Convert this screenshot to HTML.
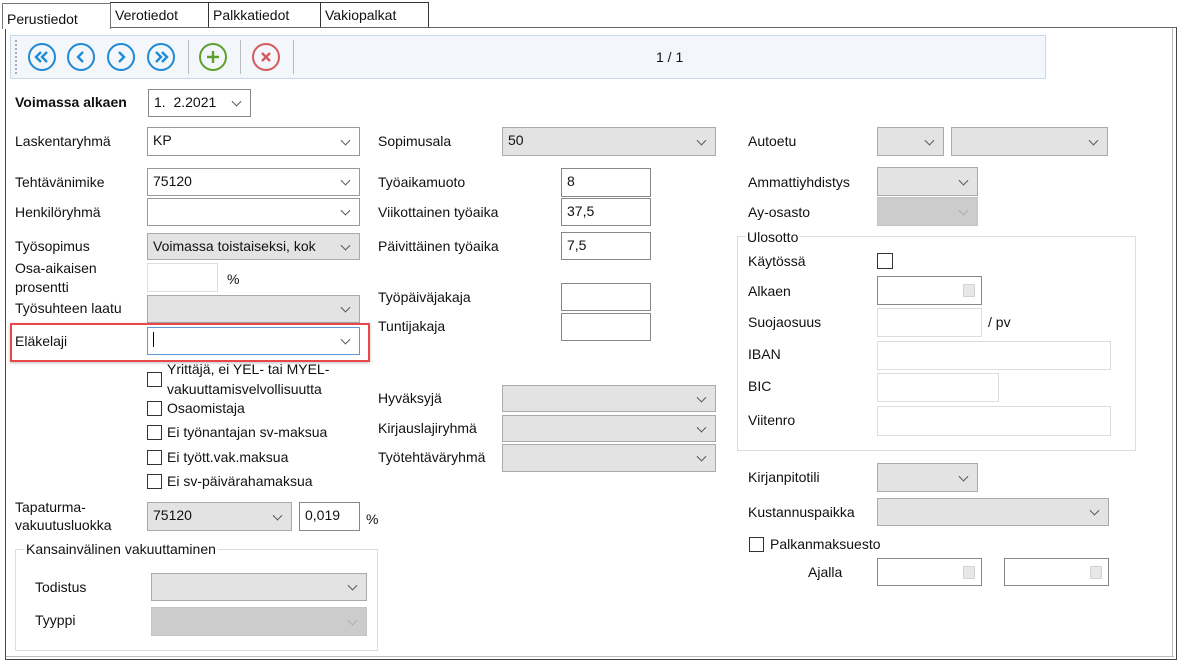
<!DOCTYPE html>
<html><head><meta charset="utf-8"><style>
*{box-sizing:border-box;margin:0;padding:0}
body{width:1180px;height:662px;background:#fff;position:relative;overflow:hidden;font-family:"Liberation Sans",sans-serif;font-size:14px;color:#111}
.a{position:absolute}
.l{position:absolute;line-height:16px;white-space:nowrap}
.s{position:absolute;border:1px solid #aaa;background:#e3e3e3;padding:3px 0 0 5px;line-height:18px}
.s.w{background:#fff;border-color:#999}
.s.d{background:#ccc;border-color:#c4c4c4}
.s::after{content:"";position:absolute;right:10px;top:50%;width:6px;height:6px;border-right:1px solid #555;border-bottom:1px solid #555;transform:translateY(-70%) rotate(45deg)}
.s.d::after{border-color:#aaa}
.i{position:absolute;border:1px solid #888;background:#fff;padding:3px 0 0 5px;line-height:18px}
.i.lt{border-color:#ddd}
.cb{position:absolute;width:15px;height:15px;border:1px solid #333;background:#fff}
.cal{position:absolute;right:6px;top:7px;width:12px;height:13px;background:#e8e8e8;border:1px solid #d2d2d2;border-radius:1px}
.tab{position:absolute;border:1px solid #333;border-bottom:none;background:#fff;padding:4px 0 0 4px;line-height:16px}
.btn{position:absolute;width:28px;height:28px;border-radius:50%;border:2px solid #1f8ad6;top:43px}
.sep{position:absolute;top:40px;width:1px;height:34px;background:#bbb}
fieldset{position:absolute;border:1px solid #ddd}
</style></head><body>
<!-- outer panel border -->
<div class="a" style="left:5px;top:27px;width:1172px;height:633px;border:1px solid #444;border-top:1px solid #666"></div>
<div class="a" style="left:6px;top:655px;width:1168px;height:2px;border-bottom:1px solid #bbb"></div>
<div class="a" style="left:1172px;top:28px;width:1px;height:628px;background:#bbb"></div>
<!-- tabs -->
<div class="tab" style="left:110px;top:2px;width:99px;height:25px">Verotiedot</div>
<div class="tab" style="left:208px;top:2px;width:113px;height:25px">Palkkatiedot</div>
<div class="tab" style="left:320px;top:2px;width:109px;height:25px">Vakiopalkat</div>
<div class="tab" style="left:2px;top:3px;width:109px;height:26px;border-color:#777;padding-top:7px;z-index:2">Perustiedot</div>
<!-- toolbar -->
<div class="a" style="left:10px;top:35px;width:1036px;height:44px;background:#f3f6fb;border:1px solid #c9d8ec"></div>
<div class="a" style="left:15px;top:40px;width:2px;height:34px;border-left:2px dotted #aab"></div>
<div class="btn" style="left:28px"><svg width="24" height="24" viewBox="0 0 24 24" style="position:absolute;left:0;top:0"><path d="M11 7l-5 5 5 5M17 7l-5 5 5 5" fill="none" stroke="#1f8ad6" stroke-width="2.4"/></svg></div>
<div class="btn" style="left:67px"><svg width="24" height="24" viewBox="0 0 24 24" style="position:absolute;left:0;top:0"><path d="M14 7l-5 5 5 5" fill="none" stroke="#1f8ad6" stroke-width="2.4"/></svg></div>
<div class="btn" style="left:107px"><svg width="24" height="24" viewBox="0 0 24 24" style="position:absolute;left:0;top:0"><path d="M10 7l5 5-5 5" fill="none" stroke="#1f8ad6" stroke-width="2.4"/></svg></div>
<div class="btn" style="left:147px"><svg width="24" height="24" viewBox="0 0 24 24" style="position:absolute;left:0;top:0"><path d="M7 7l5 5-5 5M13 7l5 5-5 5" fill="none" stroke="#1f8ad6" stroke-width="2.4"/></svg></div>
<div class="sep" style="left:188px"></div>
<div class="btn" style="left:199px;border-color:#5fa02c"><svg width="24" height="24" viewBox="0 0 24 24" style="position:absolute;left:0;top:0"><path d="M12 6v12M6 12h12" fill="none" stroke="#5fa02c" stroke-width="2.4"/></svg></div>
<div class="sep" style="left:240px"></div>
<div class="btn" style="left:252px;border-color:#d35b5b"><svg width="24" height="24" viewBox="0 0 24 24" style="position:absolute;left:0;top:0"><path d="M8 8l8 8M16 8l-8 8" fill="none" stroke="#d35b5b" stroke-width="2.4"/></svg></div>
<div class="sep" style="left:293px"></div>
<div class="l" style="left:656px;top:49px">1 / 1</div>
<!-- left column -->
<div class="l" style="left:15px;top:94px;font-weight:bold">Voimassa alkaen</div>
<div class="s w" style="left:148px;top:89px;width:103px;height:28px;border-color:#888">1.&nbsp; 2.2021</div>
<div class="l" style="left:15px;top:133px">Laskentaryhmä</div>
<div class="s w" style="left:147px;top:127px;width:213px;height:29px">KP</div>
<div class="l" style="left:15px;top:174px">Tehtävänimike</div>
<div class="s w" style="left:147px;top:168px;width:213px;height:28px">75120</div>
<div class="l" style="left:15px;top:204px">Henkilöryhmä</div>
<div class="s w" style="left:147px;top:198px;width:213px;height:28px"></div>
<div class="l" style="left:15px;top:238px">Työsopimus</div>
<div class="s" style="left:147px;top:233px;width:213px;height:27px">Voimassa toistaiseksi, kok</div>
<div class="l" style="left:15px;top:260px">Osa-aikaisen</div>
<div class="l" style="left:15px;top:279px">prosentti</div>
<div class="i lt" style="left:147px;top:263px;width:71px;height:29px"></div>
<div class="l" style="left:227px;top:271px">%</div>
<div class="l" style="left:15px;top:300px">Työsuhteen laatu</div>
<div class="s" style="left:147px;top:295px;width:213px;height:28px"></div>
<div class="a" style="left:10px;top:323px;width:360px;height:39px;border:2px solid #e8484a;box-shadow:0 1px 3px rgba(0,0,0,.25)"></div>
<div class="l" style="left:15px;top:333px">Eläkelaji</div>
<div class="s w" style="left:147px;top:327px;width:213px;height:28px;border-color:#5b9bd5"><span style="display:inline-block;width:1px;height:15px;background:#000;margin-top:1px"></span></div>
<div class="cb" style="left:147px;top:372px"></div>
<div class="l" style="left:167px;top:361px">Yrittäjä, ei YEL- tai MYEL-</div>
<div class="l" style="left:167px;top:381px">vakuuttamisvelvollisuutta</div>
<div class="cb" style="left:147px;top:401px"></div><div class="l" style="left:167px;top:400px">Osaomistaja</div>
<div class="cb" style="left:147px;top:425px"></div><div class="l" style="left:167px;top:424px">Ei työnantajan sv-maksua</div>
<div class="cb" style="left:147px;top:450px"></div><div class="l" style="left:167px;top:449px">Ei tyött.vak.maksua</div>
<div class="cb" style="left:147px;top:474px"></div><div class="l" style="left:167px;top:473px">Ei sv-päivärahamaksua</div>
<div class="l" style="left:15px;top:499px">Tapaturma-</div>
<div class="l" style="left:15px;top:517px">vakuutusluokka</div>
<div class="s" style="left:147px;top:502px;width:145px;height:29px">75120</div>
<div class="i" style="left:299px;top:502px;width:61px;height:29px">0,019</div>
<div class="l" style="left:366px;top:511px">%</div>
<fieldset style="left:15px;top:549px;width:363px;height:102px"></fieldset>
<div class="l" style="left:24px;top:541px;background:#fff;padding:0 2px">Kansainvälinen vakuuttaminen</div>
<div class="l" style="left:35px;top:579px">Todistus</div>
<div class="s" style="left:151px;top:573px;width:216px;height:28px"></div>
<div class="l" style="left:35px;top:612px">Tyyppi</div>
<div class="s d" style="left:151px;top:607px;width:216px;height:29px"></div>
<!-- middle column -->
<div class="l" style="left:378px;top:133px">Sopimusala</div>
<div class="s" style="left:502px;top:127px;width:214px;height:29px">50</div>
<div class="l" style="left:378px;top:174px">Työaikamuoto</div>
<div class="i" style="left:561px;top:168px;width:90px;height:29px">8</div>
<div class="l" style="left:378px;top:204px">Viikottainen työaika</div>
<div class="i" style="left:561px;top:198px;width:90px;height:28px">37,5</div>
<div class="l" style="left:378px;top:238px">Päivittäinen työaika</div>
<div class="i" style="left:561px;top:232px;width:90px;height:28px">7,5</div>
<div class="l" style="left:378px;top:289px">Työpäiväjakaja</div>
<div class="i" style="left:561px;top:283px;width:90px;height:28px"></div>
<div class="l" style="left:378px;top:318px">Tuntijakaja</div>
<div class="i" style="left:561px;top:313px;width:90px;height:28px"></div>
<div class="l" style="left:378px;top:390px">Hyväksyjä</div>
<div class="s" style="left:502px;top:385px;width:214px;height:27px"></div>
<div class="l" style="left:378px;top:420px">Kirjauslajiryhmä</div>
<div class="s" style="left:502px;top:415px;width:214px;height:27px"></div>
<div class="l" style="left:378px;top:449px">Työtehtäväryhmä</div>
<div class="s" style="left:502px;top:444px;width:214px;height:28px"></div>
<!-- right column -->
<div class="l" style="left:748px;top:133px">Autoetu</div>
<div class="s" style="left:877px;top:127px;width:67px;height:29px"></div>
<div class="s" style="left:951px;top:127px;width:157px;height:29px"></div>
<div class="l" style="left:748px;top:174px">Ammattiyhdistys</div>
<div class="s" style="left:877px;top:167px;width:101px;height:29px"></div>
<div class="l" style="left:748px;top:204px">Ay-osasto</div>
<div class="s d" style="left:877px;top:197px;width:101px;height:29px"></div>
<fieldset style="left:737px;top:236px;width:399px;height:215px"></fieldset>
<div class="l" style="left:746px;top:229px;background:#fff;padding:0 1px">Ulosotto</div>
<div class="l" style="left:748px;top:253px">Käytössä</div>
<div class="cb" style="left:877px;top:253px;width:16px;height:16px"></div>
<div class="l" style="left:748px;top:283px">Alkaen</div>
<div class="i" style="left:877px;top:276px;width:105px;height:29px"><div class="cal"></div></div>
<div class="l" style="left:748px;top:314px">Suojaosuus</div>
<div class="i lt" style="left:877px;top:308px;width:105px;height:29px"></div>
<div class="l" style="left:988px;top:314px">/ pv</div>
<div class="l" style="left:748px;top:346px">IBAN</div>
<div class="i lt" style="left:877px;top:341px;width:234px;height:29px"></div>
<div class="l" style="left:748px;top:378px">BIC</div>
<div class="i lt" style="left:877px;top:373px;width:122px;height:29px"></div>
<div class="l" style="left:748px;top:412px">Viitenro</div>
<div class="i lt" style="left:877px;top:406px;width:234px;height:30px"></div>
<div class="l" style="left:748px;top:469px">Kirjanpitotili</div>
<div class="s" style="left:877px;top:463px;width:101px;height:29px"></div>
<div class="l" style="left:748px;top:504px">Kustannuspaikka</div>
<div class="s" style="left:877px;top:498px;width:232px;height:28px"></div>
<div class="cb" style="left:749px;top:537px"></div>
<div class="l" style="left:770px;top:536px">Palkanmaksuesto</div>
<div class="l" style="left:808px;top:564px">Ajalla</div>
<div class="i" style="left:877px;top:558px;width:105px;height:28px"><div class="cal"></div></div>
<div class="i" style="left:1004px;top:558px;width:105px;height:28px"><div class="cal"></div></div>
</body></html>
